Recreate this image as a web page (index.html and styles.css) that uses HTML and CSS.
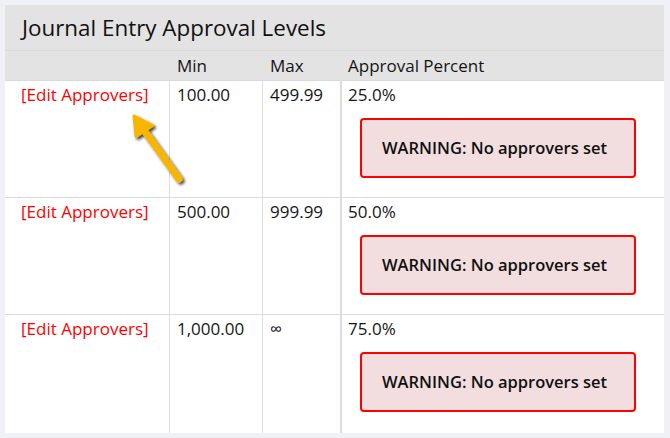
FILE: index.html
```html
<!DOCTYPE html>
<html>
<head>
<meta charset="utf-8">
<link rel="stylesheet" href="styles.css">
</head>
<body>
<div class="panel">
  <div class="panel-title">Journal Entry Approval Levels</div>
  <table class="levels">
    <thead>
      <tr>
        <th class="c-action"></th>
        <th class="c-min">Min</th>
        <th class="c-max">Max</th>
        <th class="c-pct">Approval Percent</th>
      </tr>
    </thead>
    <tbody>
      <tr>
        <td class="c-action"><a class="edit">[Edit Approvers]</a></td>
        <td class="c-min">100.00</td>
        <td class="c-max">499.99</td>
        <td class="c-pct">25.0%<div class="warning">WARNING: No approvers set</div></td>
      </tr>
      <tr>
        <td class="c-action"><a class="edit">[Edit Approvers]</a></td>
        <td class="c-min">500.00</td>
        <td class="c-max">999.99</td>
        <td class="c-pct">50.0%<div class="warning">WARNING: No approvers set</div></td>
      </tr>
      <tr>
        <td class="c-action"><a class="edit">[Edit Approvers]</a></td>
        <td class="c-min">1,000.00</td>
        <td class="c-max">∞</td>
        <td class="c-pct">75.0%<div class="warning">WARNING: No approvers set</div></td>
      </tr>
    </tbody>
  </table>
</div>
<svg class="callout" width="670" height="438" viewBox="0 0 670 438">
  <defs>
    <filter id="sh" x="-50%" y="-50%" width="200%" height="200%">
      <feDropShadow dx="2" dy="2" stdDeviation="1.6" flood-color="#000" flood-opacity="0.75"/>
    </filter>
  </defs>
  <g filter="url(#sh)" fill="#f8b500" stroke="#f8b500">
    <line x1="179" y1="179" x2="141" y2="126" stroke-width="7" stroke-linecap="round"/>
    <polygon points="134,116 152.5,125.5 136,136.5" stroke-width="3" stroke-linejoin="round"/>
  </g>
</svg>
</body>
</html>
```

FILE: styles.css
```css
html, body {
  margin: 0;
  padding: 0;
}
body {
  background: #eff1f6;
  padding: 5px 6px 6px 5px;
  font-family: "Open Sans", "Noto Sans", sans-serif;
  color: #151515;
  position: relative;
  width: 670px;
  height: 438px;
  box-sizing: border-box;
}
.panel {
  width: 659px;
  background: #fff;
}
.panel-title {
  background: #e3e3e3;
  height: 45px;
  display: flex;
  align-items: center;
  padding-left: 17px;
  font-size: 22.4px;
  font-weight: 500;
  color: #111;
  border-bottom: 1px solid #d9d9d9;
}
.levels {
  width: 659px;
  border-collapse: separate;
  border-spacing: 0;
  table-layout: fixed;
  font-size: 17px;
  line-height: 22px;
}
.levels th,
.levels td {
  box-sizing: border-box;
  text-align: left;
  padding: 0 7px;
  border-left: 1px solid transparent;
}
.levels thead th {
  background: #e3e3e3;
  height: 30px;
  font-weight: 400;
  vertical-align: middle;
  padding-top: 0;
  border-bottom: 1px solid #d9d9d9;
}
.levels td {
  vertical-align: top;
  padding-top: 3px;
  height: 117px;
  border-left-color: #dcdcdc;
  border-bottom: 1px solid #dcdcdc;
}
.levels tbody tr:last-child td {
  border-bottom: none;
  height: 118px;
}
.levels .c-action {
  width: 164px;
  padding-left: 16px;
  border-left: none;
}
.levels .c-min { width: 93px; }
.levels .c-max { width: 78px; }
.levels .c-pct {
  width: 324px;
  border-left-width: 2px;
  padding-left: 6px;
}
.edit {
  color: #f00;
  text-decoration: none;
}
.warning {
  margin: 12px 0 0 12px;
  width: 276px;
  height: 60px;
  box-sizing: border-box;
  border: 2px solid #f00;
  border-radius: 4px;
  background: #f2dede;
  padding-left: 20px;
  display: flex;
  align-items: center;
  font-size: 16.5px;
  font-weight: 600;
  color: #111;
}
.callout {
  position: absolute;
  left: 0;
  top: 0;
  pointer-events: none;
}
```
